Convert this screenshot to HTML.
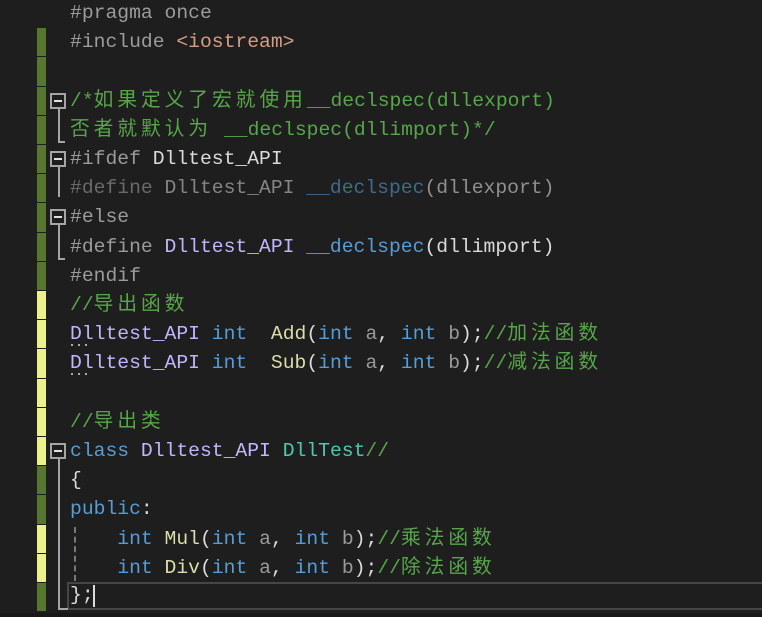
<!DOCTYPE html>
<html><head><meta charset="utf-8"><style>
html,body{margin:0;padding:0;background:#1e1e1e;width:762px;height:617px;overflow:hidden;position:relative}
.ln{position:absolute;left:70px;height:29.2px;line-height:29.2px;white-space:pre;font-family:"Liberation Mono","Noto Sans CJK SC",monospace;font-size:19.7px;color:#dadada}
.c{color:#57a64a}.cj{letter-spacing:4px}
.pp{color:#9b9b9b}.st{color:#d69d85}.m{color:#beb7ff}.k{color:#569cd6}.f{color:#dcdcaa}.t{color:#4ec9b0}.p{color:#9a9a9a}
.dm{opacity:.6}
.bar{position:absolute;left:37px;width:9px;height:28.2px}
.g{background:#57762f}.y{background:#eef08a}
.fb{position:absolute;left:50px;width:16px;height:16px;border:2px solid #a5a5a5;box-sizing:border-box;background:#1e1e1e}
.fb:after{content:"";position:absolute;left:2px;right:2px;top:5px;height:2px;background:#e0e0e0}
.vl{position:absolute;left:58px;width:2px;background:#a5a5a5}
.hl{position:absolute;height:2px;background:#a5a5a5}
</style></head><body>
<div class="bar g" style="top:28.2px"></div><div class="bar g" style="top:57.4px"></div><div class="bar g" style="top:86.6px"></div><div class="bar g" style="top:115.8px"></div><div class="bar g" style="top:145px"></div><div class="bar g" style="top:174.2px"></div><div class="bar g" style="top:203.4px"></div><div class="bar g" style="top:232.6px"></div><div class="bar g" style="top:261.8px"></div>
<div class="bar y" style="top:291px"></div><div class="bar y" style="top:320.2px"></div><div class="bar y" style="top:349.4px"></div><div class="bar y" style="top:378.6px"></div><div class="bar y" style="top:407.8px"></div><div class="bar y" style="top:437px"></div>
<div class="bar g" style="top:466.2px"></div><div class="bar g" style="top:495.4px"></div>
<div class="bar y" style="top:524.6px"></div><div class="bar y" style="top:553.8px"></div>
<div class="bar g" style="top:583px"></div>
<div style="position:absolute;left:67px;top:582px;width:700px;height:28px;border:2px solid #464646;box-sizing:border-box"></div>
<div style="position:absolute;left:93px;top:585px;width:2px;height:22px;background:#dcdcdc"></div>
<div style="position:absolute;left:0;top:613px;width:762px;height:4px;background:#181818"></div>
<div class="fb" style="top:93px"></div><div class="vl" style="top:109px;height:34px"></div><div class="hl" style="left:58px;top:141px;width:7px"></div>
<div class="fb" style="top:151px"></div><div class="vl" style="top:167px;height:30px"></div>
<div class="fb" style="top:209px"></div><div class="vl" style="top:225px;height:35px"></div><div class="hl" style="left:58px;top:258px;width:7px"></div>
<div class="fb" style="top:443px"></div><div class="vl" style="top:459px;height:151px"></div><div class="hl" style="left:58px;top:608px;width:10px"></div>
<div style="position:absolute;left:74px;top:527px;width:0;height:54px;border-left:2px dashed #777"></div>
<div style="position:absolute;left:71px;top:344px;width:20px;height:2px;background:repeating-linear-gradient(90deg,#aaa 0 2px,transparent 2px 7px)"></div>
<div style="position:absolute;left:71px;top:373px;width:20px;height:2px;background:repeating-linear-gradient(90deg,#aaa 0 2px,transparent 2px 7px)"></div>
<div class="ln pp" style="top:-1px">#pragma once</div>
<div class="ln" style="top:28.2px"><span class="pp">#include </span><span class="st">&lt;iostream&gt;</span></div>
<div class="ln c" style="top:86.6px">/*<span class="cj">如果定义了宏就使用</span>__declspec(dllexport)</div>
<div class="ln c" style="top:115.8px"><span class="cj">否者就默认为</span> __declspec(dllimport)*/</div>
<div class="ln" style="top:145px"><span class="pp">#ifdef </span><span style="color:#dadada">Dlltest_API</span></div>
<div class="ln dm" style="top:174.2px"><span class="pp">#define </span><span style="color:#c8c8c8">Dlltest_API </span><span class="k">__declspec</span><span>(dllexport)</span></div>
<div class="ln pp" style="top:203.4px">#else</div>
<div class="ln" style="top:232.6px"><span class="pp">#define </span><span class="m">Dlltest_API </span><span class="k">__declspec</span>(dllimport)</div>
<div class="ln pp" style="top:261.8px">#endif</div>
<div class="ln c" style="top:291px">//<span class="cj">导出函数</span></div>
<div class="ln" style="top:320.2px"><span class="m">Dlltest_API</span> <span class="k">int</span>  <span class="f">Add</span>(<span class="k">int</span> <span class="p">a</span>, <span class="k">int</span> <span class="p">b</span>);<span class="c">//<span class="cj">加法函数</span></span></div>
<div class="ln" style="top:349.4px"><span class="m">Dlltest_API</span> <span class="k">int</span>  <span class="f">Sub</span>(<span class="k">int</span> <span class="p">a</span>, <span class="k">int</span> <span class="p">b</span>);<span class="c">//<span class="cj">减法函数</span></span></div>
<div class="ln c" style="top:407.8px">//<span class="cj">导出类</span></div>
<div class="ln" style="top:437px"><span class="k">class</span> <span class="m">Dlltest_API</span> <span class="t">DllTest</span><span class="c">//</span></div>
<div class="ln" style="top:466.2px">{</div>
<div class="ln k" style="top:495.4px">public<span style="color:#dadada">:</span></div>
<div class="ln" style="top:524.6px">    <span class="k">int</span> <span class="f">Mul</span>(<span class="k">int</span> <span class="p">a</span>, <span class="k">int</span> <span class="p">b</span>);<span class="c">//<span class="cj">乘法函数</span></span></div>
<div class="ln" style="top:553.8px">    <span class="k">int</span> <span class="f">Div</span>(<span class="k">int</span> <span class="p">a</span>, <span class="k">int</span> <span class="p">b</span>);<span class="c">//<span class="cj">除法函数</span></span></div>
<div class="ln" style="top:581px">};</div>
</body></html>
